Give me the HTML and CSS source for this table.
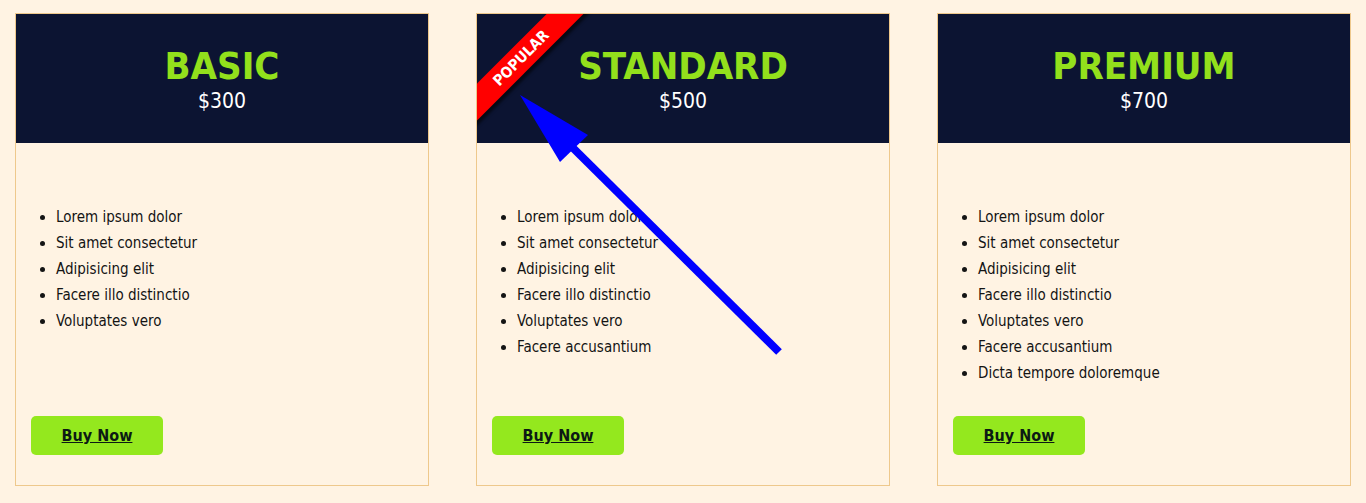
FILE: index.html
```html
<!DOCTYPE html>
<html lang="en">
<head>
<meta charset="utf-8">
<title>Pricing</title>
<link rel="stylesheet" href="styles.css">
</head>
<body>
<main class="pricing">
  <section class="card">
    <header class="card-head">
      <h2 class="plan">BASIC</h2>
      <p class="price">$300</p>
    </header>
    <div class="card-body">
      <ul class="features">
        <li>Lorem ipsum dolor</li>
        <li>Sit amet consectetur</li>
        <li>Adipisicing elit</li>
        <li>Facere illo distinctio</li>
        <li>Voluptates vero</li>
      </ul>
      <a class="buy" href="#">Buy Now</a>
    </div>
  </section>
  <section class="card">
    <div class="ribbon">POPULAR</div>
    <header class="card-head">
      <h2 class="plan">STANDARD</h2>
      <p class="price">$500</p>
    </header>
    <div class="card-body">
      <ul class="features">
        <li>Lorem ipsum dolor</li>
        <li>Sit amet consectetur</li>
        <li>Adipisicing elit</li>
        <li>Facere illo distinctio</li>
        <li>Voluptates vero</li>
        <li>Facere accusantium</li>
      </ul>
      <a class="buy" href="#">Buy Now</a>
    </div>
  </section>
  <section class="card">
    <header class="card-head">
      <h2 class="plan">PREMIUM</h2>
      <p class="price">$700</p>
    </header>
    <div class="card-body">
      <ul class="features">
        <li>Lorem ipsum dolor</li>
        <li>Sit amet consectetur</li>
        <li>Adipisicing elit</li>
        <li>Facere illo distinctio</li>
        <li>Voluptates vero</li>
        <li>Facere accusantium</li>
        <li>Dicta tempore doloremque</li>
      </ul>
      <a class="buy" href="#">Buy Now</a>
    </div>
  </section>
</main>
<svg class="annotation" width="1366" height="503" viewBox="0 0 1366 503" aria-hidden="true">
  <line x1="779" y1="352" x2="570" y2="145" stroke="#0000ff" stroke-width="8"/>
  <polygon points="520,95 560,162 588,135" fill="#0000ff"/>
</svg>
</body>
</html>
```

FILE: styles.css
```css
* {
  box-sizing: border-box;
}

html, body {
  margin: 0;
  background: #fff3e3;
}

body {
  position: relative;
  width: 1366px;
  height: 503px;
  overflow: hidden;
  font-family: "DejaVu Sans Condensed", "DejaVu Sans", sans-serif;
  color: #111;
}

.pricing {
  display: grid;
  grid-template-columns: repeat(3, 414px);
  column-gap: 47px;
  padding: 13px 15px 0 15px;
  align-items: stretch;
}

.card {
  position: relative;
  overflow: hidden;
  display: flex;
  flex-direction: column;
  background: #fff3e3;
  border: 1px solid #eec88c;
}

.card-head {
  height: 129px;
  background: #0c1432;
  text-align: center;
  padding-top: 32px;
}

.plan {
  margin: 0;
  font-size: 38px;
  line-height: 40px;
  font-weight: bold;
  color: #93e01c;
}

.price {
  margin: 0;
  font-size: 21px;
  line-height: 30px;
  color: #ffffff;
}

.card-body {
  flex: 1;
  display: flex;
  flex-direction: column;
  align-items: flex-start;
  padding: 61px 16px 30px 15px;
}

.features {
  margin: 0 0 30px 0;
  padding-left: 25px;
  font-size: 15px;
  line-height: 26px;
  color: #141414;
}

.buy {
  margin-top: auto;
  width: 132px;
  height: 39px;
  display: flex;
  align-items: center;
  justify-content: center;
  background: #94e81e;
  border-radius: 5px;
  color: #0c1a14;
  font-size: 16px;
  font-weight: bold;
  text-decoration: underline;
}

.ribbon {
  position: absolute;
  left: -36px;
  top: 31px;
  width: 160px;
  height: 26px;
  transform: rotate(-45deg);
  background: #ff0000;
  color: #ffffff;
  font-size: 15px;
  font-weight: bold;
  line-height: 26px;
  text-align: center;
  box-shadow: 0 4px 3px rgba(0, 0, 0, 0.6);
  z-index: 2;
}

.annotation {
  position: absolute;
  top: 0;
  left: 0;
  pointer-events: none;
}
```
